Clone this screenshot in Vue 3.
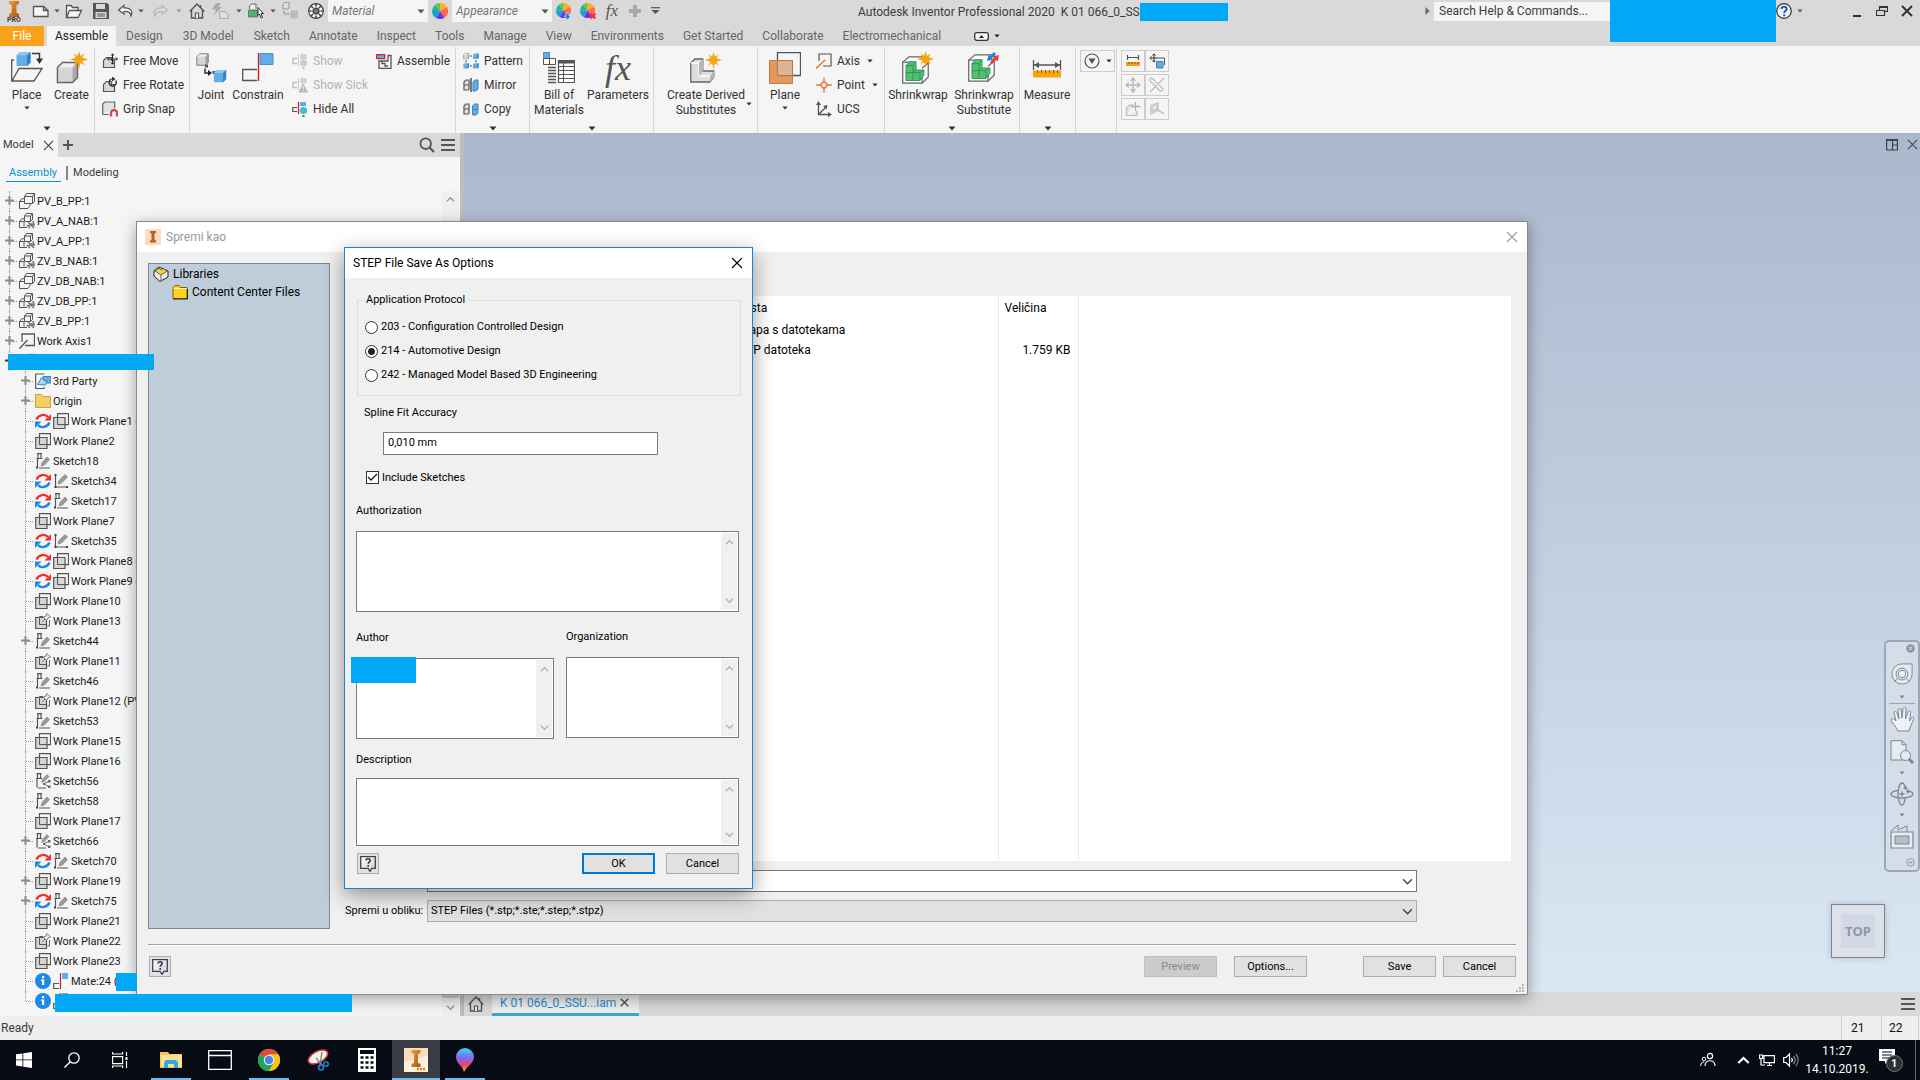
<script setup>
import { h, ref } from 'vue'

const Ico = (p) =>
  h('svg', { class: 'ico', width: p.w || p.s || 16, height: p.s || 16, 'aria-hidden': 'true' }, [h('use', { href: '#i-' + p.n })])
Ico.props = ['n', 's', 'w']

const tabs = ['Design', '3D Model', 'Sketch', 'Annotate', 'Inspect', 'Tools', 'Manage', 'View', 'Environments', 'Get Started', 'Collaborate', 'Electromechanical']

const n = (text, icon, opt = {}) => ({ text, icon, ...opt })
const child = (text, icon, opt = {}) => ({ text, icon, child: true, ...opt })
const tree = [
  n('PV_B_PP:1', 'asm', { plus: true }),
  n('PV_A_NAB:1', 'asmp', { plus: true }),
  n('PV_A_PP:1', 'asmp', { plus: true }),
  n('ZV_B_NAB:1', 'asmp', { plus: true }),
  n('ZV_DB_NAB:1', 'asm', { plus: true }),
  n('ZV_DB_PP:1', 'asmp', { plus: true }),
  n('ZV_B_PP:1', 'asmp', { plus: true }),
  n('Work Axis1', 'waxis', { plus: true }),
  n('', 'asmblue', { minus: true, mask: 'mask-row' }),
  child('3rd Party', 'third', { plus: true }),
  child('Origin', 'folder', { plus: true }),
  child('Work Plane1 (', 'plane', { pre: 'sync' }),
  child('Work Plane2', 'plane'),
  child('Sketch18', 'sketchp'),
  child('Sketch34', 'sketch', { pre: 'sync' }),
  child('Sketch17', 'sketchp', { pre: 'sync' }),
  child('Work Plane7', 'plane'),
  child('Sketch35', 'sketch', { pre: 'sync' }),
  child('Work Plane8 (', 'plane', { pre: 'sync' }),
  child('Work Plane9 (', 'plane', { pre: 'sync' }),
  child('Work Plane10', 'plane'),
  child('Work Plane13', 'planep'),
  child('Sketch44', 'sketchp', { plus: true }),
  child('Work Plane11', 'planep'),
  child('Sketch46', 'sketchp'),
  child('Work Plane12 (PV', 'planep'),
  child('Sketch53', 'sketchp'),
  child('Work Plane15', 'plane'),
  child('Work Plane16', 'plane'),
  child('Sketch56', 'sketchs'),
  child('Sketch58', 'sketchp'),
  child('Work Plane17', 'plane'),
  child('Sketch66', 'sketchs', { plus: true }),
  child('Sketch70', 'sketchp', { pre: 'sync' }),
  child('Work Plane19', 'plane', { plus: true }),
  child('Sketch75', 'sketchp', { pre: 'sync', plus: true }),
  child('Work Plane21', 'plane'),
  child('Work Plane22', 'planep'),
  child('Work Plane23', 'plane'),
  child('Mate:24 (', 'mate', { pre: 'info', mask: 'mask-mate' }),
  child('', 'mate', { pre: 'info', mask: 'mask-last', last: true }),
]

const protocols = [
  ['203', '203 - Configuration Controlled Design'],
  ['214', '214 - Automotive Design'],
  ['242', '242 - Managed Model Based 3D Engineering'],
]
const protocol = ref('214')
const accuracy = ref('0,010 mm')
const sketches = ref(true)
const tasks = [
  ['explorer', 'run'], ['appwin', ''], ['chrome', 'run'], ['snip', ''], ['calc', ''], ['inventor', 'active'], ['paint3d', 'run'],
]
</script>

<template>
  <svg class="defs" width="0" height="0" aria-hidden="true">
    <defs>
      <linearGradient id="g-or" x1="0" y1="0" x2="1" y2="1"><stop offset="0" stop-color="#f19a3e" /><stop offset="1" stop-color="#a5560f" /></linearGradient>
      <linearGradient id="g-paper" x1="0" y1="0" x2="1" y2="1"><stop offset="0" stop-color="#fff" /><stop offset="1" stop-color="#c9ccd4" /></linearGradient>
      <linearGradient id="g-drop" x1="0" y1="0" x2="0" y2="1"><stop offset="0" stop-color="#2fe0e8" /><stop offset=".4" stop-color="#7a6df2" /><stop offset=".7" stop-color="#e8407a" /><stop offset="1" stop-color="#ffb400" /></linearGradient>
      <symbol id="i-pro" viewBox="0 0 16 16"><path d="M3 0h10v3l-2.500 1v8l2.500 1v3H3v-3l2.500-1V4L3 3z" fill="url(#g-or)" /></symbol>
      <symbol id="i-new" viewBox="0 0 18 16"><path d="M1.500 3.500h10l4.500 4v6h-14.500zM11.500 3.500v4h4.500" fill="#f5f5f5" stroke="#555" stroke-width="1.300" /></symbol>
      <symbol id="i-open" viewBox="0 0 18 16"><path d="M1.500 14V2.500h4.500l1.500 2h5.500v3M1.500 14.500l3-7h12l-3.500 7z" fill="#f5f5f5" stroke="#555" stroke-width="1.300" /></symbol>
      <symbol id="i-save" viewBox="0 0 16 16"><path d="M0 0h14l2 2v14H0z" fill="#555" /><path d="M3 1h9v5H3zM2.500 9h11v6h-11z" fill="#d9d9d9" /><path d="M4 11h8M4 13h8" stroke="#555" /></symbol>
      <symbol id="i-undo" viewBox="0 0 18 16"><path d="M7 2.500L1.500 7 7 11V8.500c5-.5 6.500 1.500 7 4.500 2.500-5-1-8.500-7-8z" fill="#f5f5f5" stroke="#555" stroke-width="1.200" /></symbol>
      <symbol id="i-redo" viewBox="0 0 18 16"><path d="M11 2.500L16.500 7 11 11V8.500c-5-.5-6.500 1.500-7 4.500-2.500-5 1-8.500 7-8z" fill="#ddd" stroke="#b5b5b5" stroke-width="1.200" /></symbol>
      <symbol id="i-home" viewBox="0 0 16 16"><path d="M.7 8.500L8 1l7.300 7.500M2.500 7v8h11V7M11.500 2v3" fill="none" stroke="#555" stroke-width="1.400" /><path d="M6.500 15v-5h3v5" fill="#fff" stroke="#555" stroke-width="1.200" /></symbol>
      <symbol id="i-bolt" viewBox="0 0 18 16"><path d="M4 0h5L6.500 4H10L2 12l2-5.500H0z" fill="#aaa" /><path d="M7.500 8.500h5.500l3.500 3v4h-9z" fill="#ddd" stroke="#aaa" /></symbol>
      <symbol id="i-pick" viewBox="0 0 18 16"><path d="M2.500 6V3l2-2H9v4.500" fill="#eee" stroke="#666" /><path d="M1.500 7h9v7h-9z" fill="#4fb36e" stroke="#4a4a4a" stroke-width=".6" /><path d="M11 4.500l5.500 6h-2.500l1.500 4-1.500.5-1.500-4-1.500 1.500z" fill="#fff" stroke="#333" /></symbol>
      <symbol id="i-link" viewBox="0 0 18 18"><path d="M2 2l1.500-1.500H8V6L7 7H2z" fill="#ddd" stroke="#999" /><path d="M3 9v3h5" fill="none" stroke="#777" stroke-dasharray="2 1" /><path d="M9 10l1.500-1.500H17V15l-1.500 1.500H9z" fill="#bbb" /></symbol>
      <symbol id="i-mesh" viewBox="0 0 16 16"><circle cx="8" cy="8" r="7.400" fill="#f5f5f5" stroke="#444" stroke-width="1.200" /><path d="M8 .5v3M8 12.500v3M.5 8h3M12.500 8h3M3 3l2 2M11 11l2 2M3 13l2-2M11 5l2-2" stroke="#444" stroke-width="1.700" /><circle cx="8" cy="8" r="3" fill="#777" stroke="#333" stroke-width="1.200" /></symbol>
      <symbol id="i-wheel" viewBox="0 0 16 16"><path d="M8 8L8 0A8 8 0 0 1 15 4z" fill="#ffb21a" /><path d="M8 8L15 4A8 8 0 0 1 15 12z" fill="#ff6a4a" /><path d="M8 8L15 12A8 8 0 0 1 11 15.400z" fill="#ff5a5a" /><path d="M8 8L12 15A8 8 0 0 1 4 15z" fill="#6a35e8" /><path d="M8 8L4 15A8 8 0 0 1 0 8z" fill="#1f9fd0" /><path d="M8 8L0 8A8 8 0 0 1 3 1.800z" fill="#20b592" /><path d="M8 8L3 1.800A8 8 0 0 1 8 0z" fill="#6cc344" /></symbol>
      <symbol id="i-wheel1" viewBox="0 0 18 18"><use href="#i-wheel" width="15" height="15" x="1" y="1" /><path d="M11 11h3v3h2l-3.500 4L9 14h2z" fill="#1f86e0" stroke="#fff" stroke-width=".5" /></symbol>
      <symbol id="i-wheel2" viewBox="0 0 18 18"><use href="#i-wheel" width="15" height="15" x="1" y="1" /><path d="M11.500 11.500l5 5m0-5l-5 5" stroke="#e33" stroke-width="2.200" /></symbol>
      <symbol id="i-addg" viewBox="0 0 12 12"><path d="M4 0h4v4h4v4H8v4H4V8H0V4h4z" fill="#a8a8a8" /></symbol>
      <symbol id="i-qat" viewBox="0 0 9 8"><path d="M0 .7h9" stroke="#555" stroke-width="1.200" /><path d="M.5 3h8L4.500 7z" fill="#555" /></symbol>
      <symbol id="i-dn" viewBox="0 0 8 5"><path d="M.5.5h7L4 4.500z" fill="currentColor" /></symbol>
      <symbol id="i-rt" viewBox="0 0 5 8"><path d="M.5 0v8L4.500 4z" fill="#666" /></symbol>
      <symbol id="i-chev" viewBox="0 0 10 10"><path d="M1 3l4 4 4-4" fill="none" stroke="currentColor" stroke-width="1.300" /></symbol>
      <symbol id="i-up" viewBox="0 0 10 10"><path d="M1 7l4-4 4 4" fill="none" stroke="currentColor" stroke-width="1.600" /></symbol>
      <symbol id="i-down" viewBox="0 0 10 10"><path d="M1 3l4 4 4-4" fill="none" stroke="currentColor" stroke-width="1.600" /></symbol>
      <symbol id="i-x" viewBox="0 0 12 12"><path d="M1 1l10 10M11 1L1 11" stroke="currentColor" stroke-width="1.100" /></symbol>
      <symbol id="i-xb" viewBox="0 0 12 12"><path d="M1 1l10 10M11 1L1 11" stroke="currentColor" stroke-width="2" /></symbol>
      <symbol id="i-min" viewBox="0 0 12 12"><path d="M2 11h8" stroke="#333" stroke-width="2" /></symbol>
      <symbol id="i-restore" viewBox="0 0 12 12"><path d="M3.500 5V1.500h8v5H9" fill="none" stroke="#333" stroke-width="1.200" /><path d="M3.500 2h8" stroke="#333" stroke-width="2" /><path d="M.5 5.500h8v5h-8z" fill="none" stroke="#333" stroke-width="1.200" /></symbol>
      <symbol id="i-helpc" viewBox="0 0 16 16"><circle cx="8" cy="8" r="7.300" fill="#eef2fa" stroke="#333" stroke-width="1.200" /><path d="M5.500 6c0-3.300 5.200-3 5.200 0 0 1.700-2.500 1.800-2.500 4M8.200 11.300v2" fill="none" stroke="#1d4fb8" stroke-width="1.900" /></symbol>
      <symbol id="i-toggle" viewBox="0 0 15 9"><rect x=".7" y=".7" width="13.600" height="7.600" rx="2" fill="#f5f5f5" stroke="#333" stroke-width="1.300" /><path d="M5 6l2.500-3L10 6z" fill="#222" /></symbol>

      <symbol id="i-star" viewBox="0 0 18 18"><path d="M9 0l1.500 5 4-2.500-2.300 4 5.800 2-5.800 1.800 2.600 4.200-4.300-2.500L9 18l-1.500-6-4.300 2.500L5.800 10.300 0 8.500l5.800-2L3.500 2.500l4 2.500z" fill="#f7a413" /></symbol>
      <symbol id="i-cubeb" viewBox="0 0 16 16"><path d="M1 4.500L4.500 1H15v10.500L11.500 15H1z" fill="#62ade4" /><path d="M1 4.500L4.500 1H15l-3.500 3.500z" fill="#8cc6ee" /><path d="M15 1v10.500L11.500 15V4.500z" fill="#2f80c4" /></symbol>
      <symbol id="i-cubeg" viewBox="0 0 16 16"><path d="M1 4.500L4.500 1H15v10.500L11.500 15H1z" fill="#d6d6d6" /><path d="M1 4.500L4.500 1H15l-3.500 3.500z" fill="#f0f0f0" /><path d="M15 1v10.500L11.500 15V4.500z" fill="#aaa" /><path d="M1 4.500L4.500 1H15v10.500L11.500 15H1z" fill="none" stroke="#666" /></symbol>
      <symbol id="i-place" viewBox="0 0 32 32"><path d="M3 8H.7v21M8 16.500h23L23 29H1z" fill="#f5f5f5" stroke="#555" stroke-width="1.300" /><use href="#i-cubeb" width="16" height="16" x="4.500" y="-1" /><path d="M21 1.500h7.500V8" fill="none" stroke="#333" stroke-width="1.400" /><path d="M25 6.500h7L28.500 12z" fill="#333" /></symbol>
      <symbol id="i-create" viewBox="0 0 32 32"><use href="#i-cubeg" width="23" height="23" x="0" y="9" /><use href="#i-star" width="18" height="18" x="14" y="-1" /></symbol>
      <symbol id="i-fbase" viewBox="0 0 16 16"><path d="M1.500 14.500V7.500l3-3h5v3h3v7z" fill="#d9d9d9" stroke="#555" stroke-width="1.200" /></symbol>
      <symbol id="i-fmove" viewBox="0 0 16 16"><use href="#i-fbase" width="16" height="16" /><path d="M10.500 1v10M5.500 6h10M9 2.500L10.500.8 12 2.500M9 9.500l1.500 1.700L12 9.500M7 4.500L5.500 6 7 7.500M14 4.500L15.500 6 14 7.500" fill="none" stroke="#222" /></symbol>
      <symbol id="i-frot" viewBox="0 0 16 16"><use href="#i-fbase" width="16" height="16" /><path d="M9.500 2a3.600 3.600 0 1 0 4.300 1.500" fill="none" stroke="#333" stroke-width="1.500" /><path d="M10-.5v5l3.500-2.500z" fill="#333" /></symbol>
      <symbol id="i-grip" viewBox="0 0 16 16"><path d="M.7 13.500V3l2-2h10v6M.7 13.500H7" fill="#e2e2e2" stroke="#666" stroke-width="1.200" /><path d="M9 15.500v-3.500a3 3 0 0 1 6 0v3.500" fill="none" stroke="#c9534f" stroke-width="2.400" /></symbol>
      <symbol id="i-joint" viewBox="0 0 32 32"><use href="#i-cubeg" width="13" height="13" x="1" y="1" /><path d="M10 12.500h3v3h-3zM17.500 19h3v3h-3z" fill="#555" /><path d="M10 16.500V21h4" fill="none" stroke="#333" stroke-width="1.500" /><path d="M13 18l4 3-4 3z" fill="#222" /><use href="#i-cubeb" width="14" height="14" x="18" y="17" /></symbol>
      <symbol id="i-constrain" viewBox="0 0 32 32"><path d="M15 17.500H.7v11H15" fill="none" stroke="#555" stroke-width="1.300" /><path d="M16.500 1v28" stroke="#c8202a" stroke-width="1.400" /><path d="M18 1.500h13v11H18z" fill="#62ade4" stroke="#4b90c9" /></symbol>
      <symbol id="i-show" viewBox="0 0 16 16"><path d="M5 5.500H1v5h4" fill="none" stroke="#bbb" stroke-width="1.300" /><path d="M6.500 1v12M9 1.500h5v4H9z" stroke="#ccc" fill="#d3d3d3" /><circle cx="11.500" cy="10" r="3.500" fill="#ccc" /><path d="M10.500 14h2v2h-2z" fill="#bbb" /></symbol>
      <symbol id="i-sick" viewBox="0 0 16 16"><path d="M5 5.500H1v5h4" fill="none" stroke="#bbb" stroke-width="1.300" /><path d="M6.500 1v12M9 1.500h5v4H9z" stroke="#ccc" fill="#d3d3d3" /><path d="M11 6l5 9.500H6.500z" fill="#b5b5b5" /><path d="M11.200 9v3M11.200 13v1.300" stroke="#fff" /></symbol>
      <symbol id="i-hide" viewBox="0 0 16 16"><path d="M5 6.500H.8v4H5" fill="none" stroke="#555" stroke-width="1.200" /><path d="M6.500 1v12" stroke="#c8202a" stroke-width="1.300" /><path d="M8 1h6v4H8z" fill="#62ade4" /><circle cx="11.500" cy="9.500" r="3.600" fill="#3fc1c9" /><path d="M10.500 14h2v2h-2z" fill="#666" /></symbol>
      <symbol id="i-asmb" viewBox="0 0 16 16"><path d="M.7 1.700h8v4h-8z" fill="#62ade4" stroke="#c8202a" stroke-width="1.200" /><path d="M3 8h9V2.500h3v13H3zM6 8v2.500h3V13h3" fill="none" stroke="#555" stroke-width="1.300" /></symbol>
      <symbol id="i-pattern" viewBox="0 0 16 16"><use href="#i-cubeg" width="6.500" height="6.500" x="0" y="0" /><use href="#i-cubeb" width="6.500" height="6.500" x="9.500" y="0" /><use href="#i-cubeb" width="6.500" height="6.500" x="0" y="9.500" /><use href="#i-cubeb" width="6.500" height="6.500" x="9.500" y="9.500" /><path d="M7 3h2M3 7v2.500M13 7v2.500M7 13h2" stroke="#555" /></symbol>
      <symbol id="i-mirror" viewBox="0 0 16 16"><path d="M1 5l2-2h3v9l-1 1H1zM1 8h5" fill="#e5e5e5" stroke="#555" stroke-width="1.200" /><path d="M8 1v14" stroke="#333" stroke-width="1.300" /><path d="M10 5l2-2h3v9l-2 2h-3z" fill="#62ade4" stroke="#3b83bd" /></symbol>
      <symbol id="i-copy" viewBox="0 0 16 16"><path d="M1 5l2-2h3v9l-1 1H1zM1 8h5" fill="#e5e5e5" stroke="#555" stroke-width="1.200" /><path d="M9.500 5l2-2H15v9l-2 2H9.500zM9.500 8.500H15" fill="#62ade4" stroke="#3b83bd" /></symbol>
      <symbol id="i-bom" viewBox="0 0 32 32"><path d="M.5.500h6v6h-6z" fill="#62ade4" stroke="#4b90c9" /><path d="M.5 6.500h6v6h-6zM6.500 6.500h6v6h-6z" fill="#fff" stroke="#555" /><path d="M5 15.500h8M5 18.500h8M5 21.500h8M5 24.500h8M5 27.500h8M5 30.500h8" stroke="#555" stroke-width="1.400" /><path d="M15.500 8.500h16v22h-16z" fill="#fff" stroke="#555" stroke-width="1.200" /><path d="M15.500 10h16" stroke="#555" stroke-width="3" /><path d="M15.500 14.500h16M15.500 18.500h16M15.500 22.500h16M15.500 26.500h16M20.500 9v21" stroke="#555" /></symbol>
      <symbol id="i-derive" viewBox="0 0 32 32"><path d="M.8 29V11l4-4h8v12h11v6l-4 5H.8z" fill="#ddd" stroke="#666" stroke-width="1.300" /><path d="M1 11h8v13h11" fill="none" stroke="#fff" stroke-width="1.300" /><path d="M9 11l4-4v12l-4 5M20 24v6l4-5v-6z" fill="#b5b5b5" /><use href="#i-star" width="17" height="17" x="15" y="0" /></symbol>
      <symbol id="i-bplane" viewBox="0 0 32 32"><path d="M8.500.500h23v23h-23z" fill="none" stroke="#555" stroke-width="1.300" /><path d="M.5 8.500h23v23H.5z" fill="#e0803a" fill-opacity=".8" stroke="#d0793b" /><path d="M8.500 8.500h15v15h-15z" fill="#dfb493" stroke="#b07a50" /></symbol>
      <symbol id="i-axis" viewBox="0 0 16 16"><path d="M3 8V1h12v12H7" fill="none" stroke="#555" stroke-width="1.200" /><path d="M0 15.500L9 7" stroke="#e0702a" stroke-width="1.400" /></symbol>
      <symbol id="i-point" viewBox="0 0 16 16"><path d="M8 0v16M0 8h16" stroke="#e08850" stroke-width="1.300" /><path d="M8 3l5 5-5 5-5-5z" fill="#e08850" /><circle cx="8" cy="8" r="2" fill="#f5f5f5" /></symbol>
      <symbol id="i-ucs" viewBox="0 0 16 16"><path d="M2.500 2v11.500H14M3 13L10 6" fill="none" stroke="#555" stroke-width="1.300" /><path d="M0 4l2.500-4L5 4zM12 11l4 2.500-4 2.500zM7 5l4.500-1-1 4.500z" fill="#555" /></symbol>
      <symbol id="i-wrapbox" viewBox="0 0 32 32"><path d="M.8 7L8 1h22v23l-7 7H.8z" fill="#fbfbfb" stroke="#666" stroke-width="1.400" /><path d="M.8 7H10M23 18v13M23 14l7-6" fill="none" stroke="#666" stroke-width="1.400" /><path d="M4.500 28V11l4-4.500h7.500v9.500h9v6l-4.500 6z" fill="#4fc074" stroke="#2f8f50" /><path d="M4.500 19h16M12.500 11v17M4.500 11h8l3.500-4.500M12.500 19l3.500-3M20.500 19l4.500-3M20.500 19v9" fill="none" stroke="#2f8f50" /></symbol>
      <symbol id="i-wrap" viewBox="0 0 32 32"><use href="#i-wrapbox" width="28" height="28" x="0" y="4" /><use href="#i-star" width="17" height="17" x="15" y="-1" /></symbol>
      <symbol id="i-wraps" viewBox="0 0 32 32"><use href="#i-wrapbox" width="28" height="28" x="0" y="2" /><path d="M26 0l-4 4-1.500-1.500L19 9l6.500-1.500L24 6l4-4z" fill="#1f86e0" /><path d="M22 10l4-4-1.500-1.500L31 3l-1.500 6.500L28 8l-4 4z" fill="#ee3a30" /></symbol>
      <symbol id="i-measure" viewBox="0 0 32 32"><path d="M2.500 8v10M29.500 8v10M3 13h26" stroke="#555" stroke-width="1.300" /><path d="M3 13l5-3v6zM29 13l-5-3v6z" fill="#555" /><path d="M2 18.500h28v7H2z" fill="#f7a413" /><path d="M6.500 18v3M10.500 18v3M14.500 18v3M18.500 18v3M22.500 18v3M26.500 18v3" stroke="#8c5a00" /></symbol>
      <symbol id="i-filter" viewBox="0 0 16 16"><circle cx="8" cy="8" r="7" fill="#f5f5f5" stroke="#555" stroke-width="1.200" /><path d="M4.500 5.500h7L8 11z" fill="#555" /></symbol>
      <symbol id="i-smeas" viewBox="0 0 14 14"><path d="M1.500 1v5M12.500 1v5M2 3.500h10" stroke="#555" stroke-width="1.200" /><path d="M0 8h14v4H0z" fill="#f7a413" /><path d="M3 8v2M6 8v2M9 8v2M12 8v2" stroke="#7a5000" /></symbol>
      <symbol id="i-smove" viewBox="0 0 16 16"><path d="M5 1v8M1 5h8M3.500 2.500L5 .8l1.500 1.700M3.500 7.500L5 9.200l1.500-1.700M2.500 3.500L.8 5l1.700 1.500" fill="none" stroke="#333" /><path d="M9 5h6.500v7" fill="none" stroke="#555" /><path d="M7.500 8.500h6.500v6.500H7.500z" fill="#62ade4" stroke="#3b83bd" /></symbol>
      <symbol id="i-dmove" viewBox="0 0 16 16"><path d="M8 1v14M1 8h14M5.500 4L8 1l2.500 3M5.500 12L8 15l2.500-3M4 5.500L1 8l3 2.500M12 5.500L15 8l-3 2.500" fill="none" stroke="#b8b8b8" stroke-width="1.400" /></symbol>
      <symbol id="i-drot" viewBox="0 0 16 16"><path d="M1 15L15 1M3 1l11 11M1.500 4.500l9 9M3 1a2 2 0 0 0-1.500 3.500M14 12a2 2 0 0 1-3.500 1.500" fill="none" stroke="#bdbdbd" stroke-width="1.300" /></symbol>
      <symbol id="i-dfree" viewBox="0 0 16 16"><path d="M1.500 14.500V7l3-3h4M1.500 14.500H12V10" fill="#e8e8e8" stroke="#bbb" stroke-width="1.200" /><path d="M10.500 1v9M6 5.500h9.500" stroke="#b0b0b0" stroke-width="1.300" /></symbol>
      <symbol id="i-dplane" viewBox="0 0 16 16"><path d="M1 4l9-3v9L1 14z" fill="#ccc" /><path d="M4 5.500l3-1v3l-3 1z" fill="#eee" /><path d="M8 8l7 5" stroke="#bbb" stroke-width="1.500" /></symbol>

      <symbol id="i-plus" viewBox="0 0 9 9"><path d="M4.500 0v9M0 4.500h9" stroke="#8a8a8a" stroke-width="2" /></symbol>
      <symbol id="i-plusd" viewBox="0 0 10 10"><path d="M5 0v10M0 5h10" stroke="#555" stroke-width="2" /></symbol>
      <symbol id="i-minus" viewBox="0 0 9 9"><path d="M0 4.500h9" stroke="#333" stroke-width="2" /></symbol>
      <symbol id="i-asm" viewBox="0 0 16 16"><path d="M5.500 3.500l2-3h8v8l-2 2h-8zM5.500 3.500h8v7M13.500 3.500l2-3M5 6l-2-.5-2.500 3v7H9l2-3v-2M.5 8.500h4.500" fill="none" stroke="#555" /></symbol>
      <symbol id="i-asmp" viewBox="0 0 16 16"><path d="M5.500 3l2-2.500h6v6l-2 2h-6zM5.500 3h6v5.500M11.500 3l2-2.500M5 6l-2-.5-2.500 3v6H8M.5 8.500h4.500M5 8.500v5" fill="none" stroke="#555" /><path d="M9 9l6 6M9 14l3-3 3 1-1-4M8 12l3 3" fill="none" stroke="#777" stroke-width="1.600" /></symbol>
      <symbol id="i-asmblue" viewBox="0 0 16 16"><use href="#i-cubeb" width="10" height="10" x="6" y="0" /></symbol>
      <symbol id="i-waxis" viewBox="0 0 16 16"><path d="M3 9V1h12.500v11.500H6" fill="none" stroke="#555" stroke-width="1.300" /><path d="M.5 15.500L8.500 7" stroke="#555" stroke-width="1.300" /></symbol>
      <symbol id="i-third" viewBox="0 0 16 16"><path d="M9.500 1H.7v14.500H9V14" fill="#fff" stroke="#555" stroke-width="1.200" /><path d="M8 3.500h8v6.500H8z" fill="#62ade4" stroke="#3b83bd" /><path d="M2.500 11.500l4-7 3 3.500h3l-2 4z" fill="#a8d3f2" stroke="#3b83bd" /></symbol>
      <symbol id="i-folder" viewBox="0 0 16 16"><path d="M.5 1.500h6l1 2h8v11H.5z" fill="#f4cf65" stroke="#c9a23c" /></symbol>
      <symbol id="i-plane" viewBox="0 0 16 16"><path d="M4.500.700h11v11h-11z" fill="#f5f5f5" stroke="#555" stroke-width="1.200" /><path d="M.7 4.500H12v11H.7z" fill="#cfcfcf" fill-opacity=".8" stroke="#555" stroke-width="1.200" /><path d="M4.500 4.500v7H12" fill="none" stroke="#555" /></symbol>
      <symbol id="i-planep" viewBox="0 0 16 16"><path d="M4.500 6V3.500h4M14.500 7v6h-2" fill="none" stroke="#666" /><path d="M.7 4.500H11.500v11H.7z" fill="#d5d5d5" stroke="#555" stroke-width="1.200" /><path d="M4.500 4.500v7h7" fill="none" stroke="#555" /><path d="M7 9l3-3-1.500-1.500L11 3l1-2.500L15.500 4 13 5l-1.500 2.500L10 6" fill="#eee" stroke="#777" /></symbol>
      <symbol id="i-sketch" viewBox="0 0 16 16"><path d="M2.500 3v11H13" fill="none" stroke="#555" stroke-width="1.200" /><path d="M1.500 1h2v2h-2zM1.500 13h2v2h-2zM13 13h2v2h-2z" fill="#444" /><path d="M5 11l1-3.500 6-6 2.500 2.500-6 6z" fill="#9a9a9a" stroke="#777" stroke-width=".6" /></symbol>
      <symbol id="i-sketchp" viewBox="0 0 16 16"><path d="M2 .7h5M3 1v4M6 1v4M1.500 5.500h6M2.500 6v8.500M4 15h11" fill="none" stroke="#555" stroke-width="1.200" /><path d="M1 13.500h2v2H1z" fill="#444" /><path d="M6 13l1-3.500 5-5.500 2.500 2.500-5 5.500z" fill="#9a9a9a" stroke="#777" stroke-width=".6" /></symbol>
      <symbol id="i-sketchs" viewBox="0 0 16 16"><path d="M1.500.700h5M2.500 1v4M5.500 1v4M1 5.500h6M2 6v8.500M3 15h8" fill="none" stroke="#555" stroke-width="1.200" /><path d="M6 10l1-3.500 5-5.500 2.500 2.500-5 5.500z" fill="#9a9a9a" /><path d="M9 11l5-3M9 11l5 3" stroke="#666" fill="none" /><path d="M13 7h2.500v2.500H13zM13 12.500h2.500V15H13zM8 10h2v2H8z" fill="#666" /></symbol>
      <symbol id="i-sync" viewBox="0 0 16 16"><path d="M1.500 6.500C3.500 1.500 10 .5 13 4" fill="none" stroke="#f2302c" stroke-width="2.400" /><path d="M16 1v6.500H9.500z" fill="#f2302c" /><path d="M14.500 9.500C12.500 14.500 6 15.500 3 12" fill="none" stroke="#1a8be6" stroke-width="2.400" /><path d="M0 15V8.500h6.500z" fill="#1a8be6" /></symbol>
      <symbol id="i-info" viewBox="0 0 16 16"><circle cx="8" cy="8" r="8" fill="#1a8be6" /><path d="M7 3h2.200v2.200H7zM6 6.500h3.200V12H7V8H6z" fill="#fff" /></symbol>
      <symbol id="i-mate" viewBox="0 0 16 16"><path d="M6 10.500H.7v5H6" fill="none" stroke="#555" stroke-width="1.200" /><path d="M7.500 0v16" stroke="#c8202a" stroke-width="1.200" /><path d="M9 0h6v6H9z" fill="#62ade4" /></symbol>
      <symbol id="i-mag" viewBox="0 0 16 16"><circle cx="6.700" cy="6.700" r="5.300" fill="none" stroke="#555" stroke-width="1.800" /><path d="M10.500 10.500l4.500 4.500" stroke="#555" stroke-width="2.200" /></symbol>
      <symbol id="i-menu" viewBox="0 0 14 12"><path d="M0 1h14M0 6h14M0 11h14" stroke="#555" stroke-width="2" /></symbol>
      <symbol id="i-dock" viewBox="0 0 12 12"><path d="M.6 1h10.800v10H.6zM6.500 1v10M6.500 6h5" fill="none" stroke="#444" stroke-width="1.200" /><path d="M0 1h12" stroke="#444" stroke-width="2" /></symbol>
      <symbol id="i-invs" viewBox="0 0 16 16"><path d="M0 0h16v16H0z" fill="#fbdcc0" /><path d="M5 2h6v2l-1.500.5v6.500l1.500.5v2H5v-2l1.500-.5V4.500L5 4z" fill="#b5651d" /></symbol>
      <symbol id="i-lib" viewBox="0 0 16 16"><path d="M1 5l5-4 9 4v6l-8 4.500L1 10z" fill="#f2efdc" stroke="#222" /><path d="M2 5l6 4 6-4-3.500-2.500L8 4 6 2z" fill="#e9d936" stroke="#444" stroke-width=".8" /><path d="M8 9v6" stroke="#666" /></symbol>
      <symbol id="i-yfold" viewBox="0 0 16 16"><path d="M1 3.500l2-2h4l1.500 2H15v11H1z" fill="#ffd21f" stroke="#7a6200" /><path d="M1 15h14.500V5" fill="none" stroke="#222" /><path d="M1.500 4.500h13" stroke="#fff3a8" /></symbol>
      <symbol id="i-help" viewBox="0 0 16 16"><path d="M.7.700h14.600v11.600H12l-2 3-2-3H.7z" fill="url(#g-paper)" stroke="#3c4352" stroke-width="1.300" /><path d="M6 4.500c0-2.500 4.200-2.300 4.200 0 0 1.300-2 1.500-2 3.300M8.200 9v1.800" fill="none" stroke="#2b2f3a" stroke-width="1.500" /></symbol>
      <symbol id="i-grab" viewBox="0 0 8 8"><path d="M6 0h2v2H6zM6 3h2v2H6zM6 6h2v2H6zM3 3h2v2H3zM3 6h2v2H3zM0 6h2v2H0z" fill="#b8b8b8" /></symbol>

      <symbol id="i-nx" viewBox="0 0 9 9"><circle cx="4.500" cy="4.500" r="4.300" fill="#8f97a4" /><path d="M2.800 2.800l3.400 3.400M6.200 2.800L2.800 6.200" stroke="#e3e8f0" /></symbol>
      <symbol id="i-nm" viewBox="0 0 9 9"><circle cx="4.500" cy="4.500" r="3.800" fill="none" stroke="#8f97a4" /><path d="M2.500 4.500h4" stroke="#8f97a4" stroke-width="1.500" /></symbol>
      <symbol id="i-nwheel" viewBox="0 0 24 24"><path d="M12 1h11v11A11 11 0 1 1 12 1z" fill="#e6ebf2" stroke="#7d8591" /><circle cx="12" cy="12" r="6.500" fill="#d8dee8" stroke="#7d8591" /><circle cx="12" cy="12" r="4" fill="#eef1f6" stroke="#7d8591" /><path d="M7 17l-3 3M17 17l3 3" stroke="#7d8591" /></symbol>
      <symbol id="i-nhand" viewBox="0 0 24 26"><path d="M8 24C6 19 1 15 1 13s3-2 5 1L4 6c0-2 2.500-2 3 0l2 6-1-9c0-2 3-2 3 0l1 8 1-9c0-2 3-2 3 0l-.5 10L18 5c.5-2 3-1.500 2.700.3L19.500 14l2-3c1-1.500 3-.5 2 1.500C21 18 20 20 19 24z" fill="#eef1f6" stroke="#7d8591" /></symbol>
      <symbol id="i-nzoom" viewBox="0 0 24 24"><path d="M1 .700h11l4 4V20H1z" fill="#e6ebf2" stroke="#7d8591" /><path d="M12 .700v4h4" fill="none" stroke="#7d8591" /><path d="M19 19l4 4" stroke="#7d8591" stroke-width="3" /><circle cx="15.500" cy="15.500" r="5" fill="#e6ebf2" stroke="#7d8591" /></symbol>
      <symbol id="i-norb" viewBox="0 0 24 24"><path d="M9 8.300C4 8.800 1 10.200 1 12c0 2.200 5 4 11 4s11-1.800 11-4c0-1.300-2-2.500-5-3.200M15 16.500C14.500 20.500 13.500 23 12 23c-2.200 0-4-5-4-11S9.800 1 12 1c1.500 0 2.700 2 3.400 5" fill="none" stroke="#7d8591" stroke-width="1.300" /><path d="M12 9.500v5M9.500 12h5M15.500 4v4M13.500 6h4M18 7.500v4M16 9.500h4" stroke="#7d8591" stroke-width="1.300" /></symbol>
      <symbol id="i-nlook" viewBox="0 0 24 26"><path d="M1 9h22v16H1z" fill="#e6ebf2" stroke="#7d8591" stroke-width="1.200" /><path d="M5 13h14v8H5z" fill="#b4bdcb" stroke="#7d8591" /><path d="M1 8l7-6v5l9-4v6" fill="none" stroke="#7d8591" /></symbol>

      <symbol id="i-win" viewBox="0 0 16 16"><path d="M0 2.300L6.500 1.400v6.100H0zM7.300 1.300L16 0v7.500H7.300zM0 8.300h6.500v6.200L0 13.600zM7.300 8.300H16V16l-8.700-1.300z" fill="#fff" /></symbol>
      <symbol id="i-wsearch" viewBox="0 0 16 16"><circle cx="10" cy="6" r="5.200" fill="none" stroke="#fff" stroke-width="1.300" /><path d="M6.300 9.700L.5 15.500" stroke="#fff" stroke-width="1.400" /></symbol>
      <symbol id="i-tview" viewBox="0 0 16 16"><path d="M.6 4.600h10v7H.6zM.6 0v2h10V0M.6 16v-2h10v2M14.500 0v4M14.500 9v7" fill="none" stroke="#fff" stroke-width="1.200" /><path d="M13.500 5h2v3h-2z" fill="#fff" /></symbol>
      <symbol id="i-explorer" viewBox="0 0 22 20"><path d="M0 2h8l1.500 2H22v14H0z" fill="#f0c75a" /><path d="M1 5h21v12H1z" fill="#fbe08e" /><path d="M4 18v-5.500L6 10h10l2 2.500V18h-4v-4H8v4z" fill="#2ea8e6" /></symbol>
      <symbol id="i-appwin" viewBox="0 0 24 20"><path d="M.7.700h22.600v18.600H.7zM.7 5.500h22.600" fill="none" stroke="#fff" stroke-width="1.300" /></symbol>
      <symbol id="i-chrome" viewBox="0 0 22 22"><circle cx="11" cy="11" r="11" fill="#fbc116" /><path d="M11 11L1.500 5.500A11 11 0 0 1 20.500 5.500H11z" fill="#dd4b3e" /><path d="M11 11L1.500 5.500A11 11 0 0 0 11 22l5-8.500z" fill="#1da362" /><path d="M20.500 5.500H11V11l5 2.500L11 22A11 11 0 0 0 20.500 5.500z" fill="#fbc116" /><circle cx="11" cy="11" r="5.200" fill="#f5f5f5" /><circle cx="11" cy="11" r="4.200" fill="#4a86e8" /></symbol>
      <symbol id="i-snip" viewBox="0 0 22 22"><ellipse cx="11" cy="8" rx="10.500" ry="5.500" fill="#f3f3f3" stroke="#d93a3a" stroke-width="1.500" transform="rotate(-28 11 8)" /><path d="M9 9l6 7M15 3l-2 13" stroke="#888" stroke-width="1.500" /><circle cx="19" cy="15" r="2.200" fill="none" stroke="#1e7fc4" stroke-width="1.600" /><circle cx="14" cy="18.500" r="2.400" fill="none" stroke="#1e7fc4" stroke-width="1.600" /></symbol>
      <symbol id="i-calc" viewBox="0 0 18 24"><path d="M0 0h18v24H0z" fill="#fff" /><path d="M2 2h14v4H2z" fill="#0a0c12" /><path d="M2.500 9.500h13.500M2.500 14.500h13.500M2.500 19.500h13.500" stroke="#0a0c12" stroke-width="2.500" stroke-dasharray="3 2" /></symbol>
      <symbol id="i-inventor" viewBox="0 0 24 24"><path d="M0 0h24v24H0z" fill="#fbdcbf" /><path d="M0 14L24 8v16H0z" fill="#fff0e0" /><path d="M7.500 2h9v3l-2.500.8V15l2.500.8V19h-9v-3.200L10 15V5.800L7.500 5z" fill="url(#g-or)" /><path d="M13 21h8" stroke="#e07b1a" stroke-width="2.500" stroke-dasharray="2 1" /></symbol>
      <symbol id="i-paint3d" viewBox="0 0 20 24"><path d="M10 0a9 9 0 0 1 9 9c0 6-6 8-10 15 -1-2-1-4-3-6C3 15 1 13 1 9a9 9 0 0 1 9-9z" fill="url(#g-drop)" /></symbol>
      <symbol id="i-people" viewBox="0 0 16 16"><circle cx="10" cy="4" r="2.600" fill="none" stroke="#fff" stroke-width="1.200" /><path d="M5 14c0-7 10-7 10 0" fill="none" stroke="#fff" stroke-width="1.200" /><circle cx="4" cy="7" r="1.800" fill="none" stroke="#fff" /><path d="M.7 14c0-3 1.500-4 3.500-4" fill="none" stroke="#fff" /></symbol>
      <symbol id="i-net" viewBox="0 0 16 16"><path d="M5 3.600h10.400v7H5zM8 13.500h5M10.500 10.600v3M.6 3h3v3.500h-3zM2 6.500V13h4" fill="none" stroke="#fff" stroke-width="1.200" /></symbol>
      <symbol id="i-vol" viewBox="0 0 16 16"><path d="M.7 5.500H3l3.500-3.500v12L3 10.500H.7z" fill="none" stroke="#fff" stroke-width="1.200" /><path d="M8.500 6c1 1.200 1 2.800 0 4" fill="none" stroke="#fff" stroke-width="1.200" /><path d="M10.500 4c2 2.400 2 5.600 0 8M12.800 2c3 3.600 3 8.400 0 12" fill="none" stroke="#888" stroke-width="1.200" /></symbol>
      <symbol id="i-note" viewBox="0 0 24 24"><path d="M0 1h16v12h-7l-3 3v-3H0z" fill="#fff" /><path d="M3 4h10M3 7h10M3 10h7" stroke="#0a0c12" /><circle cx="15.500" cy="15.500" r="8" fill="#2b2e33" stroke="#777" /></symbol>
    </defs>
  </svg>

  <div class="app">
    <header class="title">
      <div class="qat">
        <span class="logo"><Ico n="pro" :s="16" /><b>PRO</b></span>
        <button class="q w26" aria-label="New"><Ico n="new" :w="18" /></button><Ico class="ar" n="dn" :w="6" :s="4" />
        <button class="q w28" aria-label="Open"><Ico n="open" :w="18" /></button>
        <button class="q w26" aria-label="Save"><Ico n="save" /></button>
        <button class="q w24" aria-label="Undo"><Ico n="undo" :w="18" /></button><Ico class="ar" n="dn" :w="6" :s="4" />
        <button class="q w32" aria-label="Redo"><Ico n="redo" :w="18" /></button><Ico class="ar dim" n="dn" :w="6" :s="4" />
        <button class="q w30" aria-label="Home"><Ico n="home" /></button>
        <button class="q w18" aria-label="Update"><Ico n="bolt" :w="18" /></button><span class="sp" /><Ico class="ar" n="dn" :w="6" :s="4" />
        <button class="q w28" aria-label="Select"><Ico n="pick" :w="18" /></button><Ico class="ar" n="dn" :w="6" :s="4" />
        <button class="q w28" aria-label="Adjust"><Ico n="link" :w="18" :s="18" /></button>
        <button class="q w24" aria-label="Material browser"><Ico n="mesh" /></button>
        <span class="drop first"><select aria-label="Material"><option>Material</option></select><Ico n="dn" :w="8" :s="5" /></span>
        <button class="q w24" aria-label="Appearance browser"><Ico n="wheel" /></button>
        <span class="drop"><select aria-label="Appearance"><option>Appearance</option></select><Ico n="dn" :w="8" :s="5" /></span>
        <button class="q w24" aria-label="Adjust appearance"><Ico n="wheel1" :s="18" /></button>
        <button class="q w24" aria-label="Clear appearance"><Ico n="wheel2" :s="18" /></button>
        <button class="q w24 fx" aria-label="Parameters">fx</button>
        <button class="q w22" aria-label="Add"><Ico n="addg" :s="12" /></button>
        <button class="q w18" aria-label="Customize"><Ico n="qat" :w="9" :s="8" /></button>
      </div>
      <h1>Autodesk Inventor Professional 2020<span>K 01 066_0_SSU</span></h1>
      <span class="mask mask-title" />
      <div class="sys">
        <Ico n="rt" :w="5" :s="8" />
        <input class="search" type="text" aria-label="Search" placeholder="Search Help &amp; Commands..." />
        <span class="acct"><span class="mask mask-acct" /></span>
        <button class="q w16" aria-label="Help"><Ico n="helpc" /></button><Ico class="ar" n="dn" :w="6" :s="4" />
        <span class="wins">
          <button class="q" aria-label="Minimize"><Ico n="min" :s="12" /></button>
          <button class="q" aria-label="Restore"><Ico n="restore" :s="12" /></button>
          <button class="q" aria-label="Close"><Ico n="xb" :s="12" /></button>
        </span>
      </div>
    </header>

    <nav class="tabs">
      <button class="file">File</button>
      <button class="on">Assemble</button>
      <button v-for="t in tabs" :key="t">{{ t }}</button>
      <button class="tog" aria-label="Minimize ribbon"><Ico n="toggle" :w="15" :s="9" /><Ico n="dn" :w="6" :s="4" /></button>
    </nav>

    <section class="ribbon">
      <div class="pan p1">
        <div class="row">
          <button class="big"><Ico n="place" :s="32" />Place<Ico class="bd" n="dn" :w="6" :s="4" /></button>
          <button class="big"><Ico n="create" :s="32" />Create</button>
        </div>
        <Ico class="foot" n="dn" :w="8" :s="5" />
      </div>
      <div class="pan p2"><div class="col">
        <button class="sm"><Ico n="fmove" />Free Move</button>
        <button class="sm"><Ico n="frot" />Free Rotate</button>
        <button class="sm"><Ico n="grip" />Grip Snap</button>
      </div></div>
      <div class="pan p3"><div class="row">
        <button class="big w42"><Ico n="joint" :s="32" />Joint</button>
        <button class="big w52"><Ico n="constrain" :s="32" />Constrain</button>
        <div class="col c84">
          <button class="sm" disabled><Ico n="show" />Show</button>
          <button class="sm" disabled><Ico n="sick" />Show Sick</button>
          <button class="sm"><Ico n="hide" />Hide All</button>
        </div>
        <div class="col bare"><button class="sm"><Ico n="asmb" />Assemble</button></div>
      </div></div>
      <div class="pan p4">
        <div class="col">
          <button class="sm"><Ico n="pattern" />Pattern</button>
          <button class="sm"><Ico n="mirror" />Mirror</button>
          <button class="sm"><Ico n="copy" />Copy</button>
        </div>
        <Ico class="foot" n="dn" :w="8" :s="5" />
      </div>
      <div class="pan p5">
        <div class="row">
          <button class="big w58"><Ico n="bom" :s="32" />Bill of<br />Materials</button>
          <button class="big w60"><span class="bigfx">fx</span>Parameters</button>
        </div>
        <Ico class="foot" n="dn" :w="8" :s="5" />
      </div>
      <div class="pan p6"><div class="row">
        <button class="big w88"><Ico n="derive" :s="32" />Create Derived<br />Substitutes</button>
        <Ico class="side" n="dn" :w="6" :s="4" />
      </div></div>
      <div class="pan p7"><div class="row">
        <button class="big w54"><Ico n="bplane" :s="32" />Plane<Ico class="bd" n="dn" :w="6" :s="4" /></button>
        <div class="col c4">
          <button class="sm"><Ico n="axis" />Axis<Ico class="sd" n="dn" :w="6" :s="4" /></button>
          <button class="sm"><Ico n="point" />Point<Ico class="sd" n="dn" :w="6" :s="4" /></button>
          <button class="sm"><Ico n="ucs" />UCS</button>
        </div>
      </div></div>
      <div class="pan p8">
        <div class="row">
          <button class="big w66"><Ico n="wrap" :s="32" />Shrinkwrap</button>
          <button class="big w66"><Ico n="wraps" :s="32" />Shrinkwrap<br />Substitute</button>
        </div>
        <Ico class="foot" n="dn" :w="8" :s="5" />
      </div>
      <div class="pan p9">
        <div class="row"><button class="big w54"><Ico n="measure" :s="32" />Measure</button></div>
        <Ico class="foot" n="dn" :w="8" :s="5" />
      </div>
      <div class="pan p10"><button class="tool wide" aria-label="Filter"><Ico n="filter" /><Ico n="dn" :w="6" :s="4" /></button></div>
      <div class="pan p11">
        <button class="tool" aria-label="Distance"><Ico n="smeas" :s="14" /></button><button class="tool" aria-label="Move part"><Ico n="smove" /></button>
        <button class="tool" disabled aria-label="Move"><Ico n="dmove" /></button><button class="tool" disabled aria-label="Rotate"><Ico n="drot" /></button>
        <button class="tool" disabled aria-label="Free move"><Ico n="dfree" /></button><button class="tool" disabled aria-label="Work plane"><Ico n="dplane" /></button>
      </div>
    </section>

    <main class="work">
      <aside class="browser">
        <div class="bhead">
          <span class="model">Model<Ico n="x" :s="11" /></span>
          <button class="q add" aria-label="Add panel"><Ico n="plusd" :s="10" /></button>
          <span class="bright"><Ico n="mag" /><Ico n="menu" :w="14" :s="12" /></span>
        </div>
        <div class="modes"><a href="#assembly">Assembly</a><span>Modeling</span></div>
        <div class="tree">
          <ul>
            <li v-for="(t, i) in tree" :key="i" :class="{ kid: t.child, last: t.last }">
              <span class="stem"><Ico v-if="t.plus" class="pm" n="plus" :s="9" /><Ico v-if="t.minus" class="pm" n="minus" :s="9" /></span>
              <Ico v-if="t.pre" :n="t.pre" class="pre" /><Ico :n="t.icon" /><span class="lbl">{{ t.text }}</span>
              <span v-if="t.mask" class="mask" :class="t.mask" />
            </li>
          </ul>
          <div class="tscroll"><Ico n="up" :s="9" /><i /><Ico n="down" :s="9" /></div>
        </div>
      </aside>
      <section class="stage">
        <div class="canvas">
          <span class="docbtns"><Ico n="dock" :s="12" /><Ico n="x" :s="11" /></span>
          <div class="navbar">
            <Ico class="end" n="nx" :s="9" />
            <Ico class="n1" n="nwheel" :s="22" /><Ico class="ndn" n="dn" :w="6" :s="4" />
            <hr />
            <Ico class="n2" n="nhand" :w="24" :s="26" />
            <Ico class="n3" n="nzoom" :s="24" /><Ico class="ndn" n="dn" :w="6" :s="4" />
            <Ico class="n3" n="norb" :s="24" /><Ico class="ndn" n="dn" :w="6" :s="4" />
            <Ico class="n4" n="nlook" :w="24" :s="26" />
            <Ico class="end bot" n="nm" :s="9" />
          </div>
          <div class="cube"><span>TOP</span></div>
        </div>
        <div class="docs">
          <span class="dhome"><Ico n="home" /></span>
          <span class="doc">K 01 066_0_SSU...iam<Ico n="xb" :s="9" /></span>
          <Ico class="dmenu" n="menu" :w="14" :s="12" />
        </div>
      </section>
    </main>

    <footer class="status"><span>Ready</span><span class="cell">21</span><span class="cell">22</span></footer>

    <div class="taskbar">
      <button class="t" aria-label="Start"><Ico n="win" /></button>
      <button class="t" aria-label="Search"><Ico n="wsearch" /></button>
      <button class="t" aria-label="Task view"><Ico n="tview" /></button>
      <div class="apps">
        <button v-for="a in tasks" :key="a[0]" class="t" :class="a[1]" :aria-label="a[0]"><Ico :n="a[0]" :s="a[0] === 'appwin' || a[0] === 'explorer' ? 20 : 24" :w="a[0] === 'appwin' || a[0] === 'inventor' ? 24 : 22" /></button>
      </div>
      <div class="tray">
        <Ico n="people" /><Ico class="tc" n="up" :s="13" /><Ico n="net" /><Ico n="vol" />
        <time>11:27<br />14.10.2019.</time>
        <span class="note"><Ico n="note" :s="24" /><b>1</b></span>
        <i />
      </div>
    </div>

    <section class="win saveas">
      <header><Ico n="invs" /><span>Spremi kao</span><button class="q cls" aria-label="Close"><Ico n="x" :s="12" /></button></header>
      <div class="sbody">
        <div class="libs">
          <div><Ico n="lib" />Libraries</div>
          <div class="in"><Ico n="yfold" />Content Center Files</div>
        </div>
        <div class="smain">
          <div class="list">
            <table>
              <thead><tr><th class="name"></th><th class="kind">Vrsta</th><th class="size">Veličina</th><th></th></tr></thead>
              <tbody>
                <tr><td></td><td class="k">Mapa s datotekama</td><td></td><td></td></tr>
                <tr><td></td><td class="k">STP datoteka</td><td class="num">1.759 KB</td><td></td></tr>
                <tr class="fill"><td></td><td></td><td></td><td></td></tr>
              </tbody>
            </table>
          </div>
          <div class="frow f1"><label for="fname"></label><span class="combo"><input id="fname" type="text" aria-label="File name" /><Ico n="chev" :s="11" /></span></div>
          <div class="frow"><label for="ftype">Spremi u obliku:</label><span class="combo grey"><select id="ftype"><option>STEP Files (*.stp;*.ste;*.step;*.stpz)</option></select><Ico n="chev" :s="11" /></span></div>
        </div>
      </div>
      <div class="sfoot">
        <button class="helpb" aria-label="Help"><Ico n="help" /></button>
        <button class="btn b1" disabled>Preview</button>
        <button class="btn b2">Options...</button>
        <button class="btn b3">Save</button>
        <button class="btn b4">Cancel</button>
      </div>
      <Ico class="grab" n="grab" :s="8" />
    </section>

    <section class="win step">
      <header><span>STEP File Save As Options</span><button class="q cls" aria-label="Close"><Ico n="x" :s="12" /></button></header>
      <form @submit.prevent>
        <fieldset>
          <legend>Application Protocol</legend>
          <label v-for="p in protocols" :key="p[0]"><input v-model="protocol" type="radio" name="protocol" :value="p[0]" />{{ p[1] }}</label>
        </fieldset>
        <label class="spl" for="acc">Spline Fit Accuracy</label>
        <input id="acc" v-model="accuracy" class="acc" type="text" />
        <label class="chk"><input v-model="sketches" type="checkbox" /><svg class="tick" width="11" height="11"><path d="M1 5l3 3 6-6" fill="none" stroke="#222" stroke-width="1.400" /></svg>Include Sketches</label>
        <label class="cap" for="auth">Authorization</label>
        <div class="ta h81"><textarea id="auth" /><span><Ico n="up" :s="9" /><Ico n="down" :s="9" /></span></div>
        <div class="two">
          <div class="auth">
            <label class="cap" for="author">Author</label>
            <div class="ta h81"><textarea id="author" /><span><Ico n="up" :s="9" /><Ico n="down" :s="9" /></span><i class="mask mask-auth" /></div>
          </div>
          <div class="org">
            <label class="cap" for="org">Organization</label>
            <div class="ta h81"><textarea id="org" /><span><Ico n="up" :s="9" /><Ico n="down" :s="9" /></span></div>
          </div>
        </div>
        <label class="cap" for="desc">Description</label>
        <div class="ta h68"><textarea id="desc" /><span><Ico n="up" :s="9" /><Ico n="down" :s="9" /></span></div>
        <div class="acts">
          <button type="button" class="helpb" aria-label="Help"><Ico n="help" /></button>
          <button class="btn ok">OK</button>
          <button type="button" class="btn">Cancel</button>
        </div>
      </form>
    </section>
  </div>
</template>

<style>
html, body { height: 100%; }
body { margin: 0; overflow: hidden; }
#app { height: 100%; }
</style>

<style scoped>
.defs { position: absolute; }
* { box-sizing: border-box; }
.app { position: relative; height: 100%; display: flex; flex-direction: column; font: 12px/16px Roboto, "Noto Sans", sans-serif; color: #3a3a3a; background: #f5f5f5; }
button, input, select, textarea { font: inherit; color: inherit; margin: 0; }
button { border: 0; background: none; padding: 0; white-space: nowrap; }
.ico { display: block; flex: none; overflow: visible; }
.mask { background: #00a8f5; }

.title { position: relative; display: flex; align-items: flex-start; height: 26px; flex: none; background: #d9d9d9; }
.qat { display: flex; align-items: center; height: 22px; width: 858px; flex: none; }
.logo { width: 28px; display: flex; flex-direction: column; align-items: center; font-size: 7px; line-height: 6px; padding-top: 1px; }
.q { display: flex; align-items: center; justify-content: center; flex: none; }
.w16 { width: 16px; } .w18 { width: 18px; } .w22 { width: 22px; } .w24 { width: 24px; } .w26 { width: 26px; } .w28 { width: 28px; } .w30 { width: 30px; } .w32 { width: 32px; }
.ar { color: #555; } .ar.dim { color: #999; }
.sp { width: 6px; }
.drop { position: relative; display: flex; width: 100px; }
.drop select { appearance: none; width: 100%; height: 22px; border: 0; background: #f5f5f5; padding: 0 4px; font-style: italic; color: #777; }
.drop .ico { position: absolute; right: 3px; top: 9px; color: #555; }
.fx { font: italic 17px/20px "Liberation Serif", serif; color: #555; }
h1 { font: inherit; margin: 4px 0 0; white-space: nowrap; width: 282px; color: #3c3c3c; flex: none; }
h1 span { margin-left: 6px; }
.mask-title { position: relative; width: 88px; height: 18px; margin-top: 3px; flex: none; }
.sys { display: flex; align-items: center; height: 22px; margin-left: auto; width: 495px; flex: none; }
.search { width: 176px; height: 19px; border: 0; background: #f5f5f5; margin-left: 4px; padding: 0 5px; }
.search::placeholder { color: #3c3c3c; opacity: 1; }
.acct { width: 166px; align-self: stretch; position: relative; }
.mask-acct { position: absolute; left: 0; right: 0; top: 0; height: 42px; z-index: 2; }
.sys .ar { margin-left: 5px; }
.wins { display: flex; gap: 13px; margin-left: auto; padding-right: 7px; color: #333; }

.tabs { display: flex; height: 20px; flex: none; background: #d9d9d9; }
.tabs button { padding: 0 10px; color: #666; }
.tabs button:nth-child(n+5) { padding-right: 9px; }
.tabs .file { width: 44px; padding: 0; background: #faa21b; color: #fff; margin-right: 3px; }
.tabs .on { width: 69px; padding: 0; background: #f5f5f5; color: #222; }
.tabs .tog { display: flex; align-items: center; gap: 5px; margin-left: 14px; color: #222; }

.ribbon { display: flex; height: 87px; flex: none; background: #f5f5f5; color: #333; }
.pan { position: relative; flex: none; border-right: 1px solid #d6d6d6; margin-top: 1px; display: flex; flex-direction: column; justify-content: space-between; }
.p1 { width: 95px; } .p2 { width: 95px; } .p3 { width: 266px; } .p4 { width: 74px; } .p5 { width: 124px; } .p6 { width: 104px; } .p7 { width: 127px; } .p8 { width: 135px; } .p9 { width: 56px; } .p10 { width: 41px; }
.row { display: flex; align-items: flex-start; }
.p1 .row { padding-left: 4px; }
.p6 .row { padding-left: 8px; }
.foot { align-self: center; margin-bottom: 2px; color: #333; }
.big { display: flex; flex-direction: column; align-items: center; width: 45px; line-height: 15px; padding-top: 5px; flex: none; text-align: center; }
.big > .ico:first-child, .bigfx { margin-bottom: 4px; }
.big .bd { margin-top: 3px; }
.bigfx { font: italic 36px/32px "Liberation Serif", serif; color: #555; }
.w42 { width: 42px; } .w52 { width: 52px; } .w54 { width: 54px; } .w58 { width: 58px; } .w60 { width: 60px; } .w66 { width: 66px; } .w88 { width: 88px; }
.side { margin: 55px 0 0 -4px; }
.col { display: flex; flex-direction: column; padding: 2px 0 0 7px; flex: none; }
.c84 { width: 92px; padding-left: 8px; } .bare { padding-left: 0; } .c4 { padding-left: 4px; }
.sm { display: flex; align-items: center; gap: 5px; height: 24px; }
.sm:disabled { color: #b3b3b3; }
.sd { margin-left: 2px; }
.p10 { padding: 3px 0 0 4px; }
.p11 { border: 0; padding: 3px 0 0 4px; display: grid; grid-template-columns: 24px 23px; grid-auto-rows: 22px; row-gap: 2px; align-content: start; justify-content: start; }
.tool { width: 24px; height: 22px; border: 1px solid #ccc; display: flex; align-items: center; justify-content: center; }
.tool.wide { width: 35px; gap: 6px; }

.work { flex: 1; display: flex; min-height: 0; }
.browser { width: 464px; flex: none; border-right: 4px solid #bdbdbd; background: #f5f5f5; display: flex; flex-direction: column; min-height: 0; }
.bhead { display: flex; align-items: center; height: 24px; flex: none; background: #d9d9d9; font-size: 11px; }
.model { width: 58px; height: 100%; display: flex; align-items: center; gap: 9px; padding-left: 3px; background: #f5f5f5; }
.add { margin-left: 5px; }
.bright { margin-left: auto; display: flex; align-items: center; gap: 6px; padding-right: 5px; }
.modes { display: flex; align-items: center; height: 34px; flex: none; padding: 0 0 2px 6px; font-size: 11px; }
.modes a { color: #0a8fd6; text-decoration: none; border-bottom: 1px solid #0a8fd6; padding: 0 4px 0 3px; margin-right: 5px; }
.modes span { border-left: 2px solid #888; padding-left: 5px; line-height: 14px; }
.tree { flex: 1; display: flex; min-height: 0; }
ul { list-style: none; margin: 0; padding: 0; flex: 1; font-size: 11px; color: #1a1a1a; }
li { position: relative; display: flex; align-items: center; height: 20px; }
li.kid { padding-left: 16px; }
.pre { margin-right: 2px; }
.stem { position: relative; width: 19px; height: 20px; flex: none; }
.stem::before { content: ""; position: absolute; left: 9px; top: 0; bottom: 0; border-left: 1px dotted #999; }
.last .stem::before { bottom: 10px; }
.stem::after { content: ""; position: absolute; left: 10px; right: 2px; top: 10px; border-top: 1px dotted #999; }
.pm { position: absolute; left: 5px; top: 5px; z-index: 1; }
.lbl { margin-left: 2px; padding-top: 2px; white-space: nowrap; }
li .mask { position: absolute; z-index: 30; }
.mask-row { left: 8px; top: 3px; width: 146px; height: 16px; }
.mask-mate { left: 116px; top: 2px; width: 21px; height: 18px; }
.mask-last { left: 55px; top: 3px; width: 297px; height: 18px; }
.tscroll { width: 17px; margin-right: 1px; background: #efefef; display: flex; flex-direction: column; align-items: center; padding: 4px 0; color: #999; }
.tscroll i { flex: 1; width: 17px; margin: 80px 0 5px; background: #cdcdcd; }

.stage { flex: 1; display: flex; flex-direction: column; min-width: 0; }
.canvas { position: relative; flex: 1; background: linear-gradient(#abb7cc, #dbe7f4); }
.docbtns { position: absolute; right: 2px; top: 6px; display: flex; gap: 9px; color: #444; }
.navbar { position: absolute; right: 0; top: 507px; width: 36px; height: 232px; border: 2px solid #9da6b5; border-radius: 5px; background: #d5dde8; display: flex; flex-direction: column; align-items: center; color: #7d8591; padding-top: 2px; }
.end { align-self: flex-end; margin-right: 3px; }
.bot { margin-top: auto; margin-bottom: 3px; }
.navbar hr { width: 26px; border: 0; border-top: 1px solid #9da6b5; margin: 4px 0 3px; }
.n1 { margin: 10px 0; } .n2 { margin-bottom: 7px; } .n3 { margin-bottom: 7px; } .n4 { margin-top: 6px; }
.ndn + .n3 { margin-top: 7px; }
.cube { position: absolute; right: 35px; bottom: 34px; width: 54px; height: 54px; border: 1px solid #7f858e; background: #dde2ea; display: flex; align-items: center; justify-content: center; box-shadow: 0 0 6px rgba(90, 100, 120, .3); }
.cube span { width: 34px; height: 34px; background: #d3d9e4; text-align: center; font: bold 13px/34px "Open Sans", sans-serif; color: #8f97a5; }
.docs { display: flex; height: 24px; flex: none; background: #d9d9d9; align-items: stretch; }
.dhome { width: 28px; display: flex; align-items: center; justify-content: center; padding-right: 4px; }
.doc { width: 147px; background: #eee; border-bottom: 3px solid #3aa5df; color: #2a8fd0; display: flex; align-items: center; gap: 4px; padding-left: 8px; white-space: nowrap; }
.doc .ico { color: #555; }
.dmenu { margin: 6px 5px 0 auto; }

.status { display: flex; height: 24px; line-height: 24px; flex: none; background: #eee; padding: 0 1px; }
.status span:first-child { margin-right: auto; }
.cell { width: 40px; padding-left: 9px; border-left: 1px solid #d0d0d0; color: #111; }
.cell:last-child { width: 38px; padding-left: 7px; border-right: 1px solid #d0d0d0; }

.taskbar { display: flex; height: 40px; flex: none; background: #060b14; color: #fff; }
.t { width: 48px; height: 40px; display: flex; align-items: center; justify-content: center; }
.apps { display: flex; gap: 1px; margin-left: 3px; }
.t.run { width: 40px; margin: 0 4px; box-shadow: inset 0 -2px #76b9ed; }
.t.active { background: #3a3d42; box-shadow: inset 0 -2px #76b9ed; }
.tray { margin-left: auto; display: flex; align-items: center; color: #fff; }
.tray .ico + .ico { margin-right: 8px; }
.tray .ico.tc { margin: 0 9px 0 21px; }
time { text-align: center; line-height: 18px; width: 66px; margin-right: 9px; margin-left: -3px; }
.note { position: relative; margin-right: 12px; }
.note b { position: absolute; left: 12px; top: 7px; font-size: 11px; line-height: 18px; }
.tray i { width: 5px; height: 40px; border-left: 1px solid #666; }

.win { position: absolute; background: #f0f0f0; color: #000; font-size: 11px; line-height: 14px; display: flex; flex-direction: column; z-index: 10; }
.win header { display: flex; align-items: center; height: 30px; flex: none; background: #fff; font-size: 12px; }
.cls { margin-left: auto; }
.saveas { left: 136px; top: 221px; width: 1392px; height: 774px; border: 1px solid #8a8a8a; box-shadow: 0 4px 14px rgba(0, 0, 0, .35); }
.saveas header { color: #999; gap: 5px; padding: 0 9px 0 8px; }
.saveas header span { line-height: 20px; }
.sbody { flex: 1; display: flex; padding: 11px 16px 0 11px; gap: 15px; }
.libs { width: 182px; height: 666px; background: #bfcddb; border: 1px solid #828790; padding: 1px 4px; font-size: 12px; }
.libs div { display: flex; align-items: center; gap: 4px; height: 18px; }
.libs .in { padding-left: 19px; }
.smain { flex: 1; display: flex; flex-direction: column; padding-top: 33px; }
.list { height: 565px; background: #fff; }
table { border-collapse: collapse; width: 100%; height: 100%; table-layout: fixed; font-size: 12px; }
th, td { padding: 0 0 0 6px; text-align: left; font-weight: normal; border-right: 1px solid #e8eef4; vertical-align: middle; }
th:last-child, td:last-child { border-right: 0; }
tr { height: 20px; } thead tr { height: 24px; }
.name { width: 390px; }
.name, td:first-child { border-right: 0; }
.kind { width: 263px; } .size { width: 80px; }
.kind, .k { padding-left: 4px; }
.num { text-align: right; padding-right: 7px; }
.fill { height: auto; }
.frow { display: flex; align-items: center; margin-top: 8px; width: 1072px; }
.frow.f1 { margin-top: 9px; }
.frow label { width: 82px; flex: none; }
.combo { position: relative; flex: 1; display: flex; border: 1px solid #7a7a7a; background: #fff; height: 22px; }
.combo.grey { border-color: #adadad; background: #e1e1e1; }
.combo input, .combo select { appearance: none; border: 0; background: none; flex: 1; padding: 0 3px; }
.combo .ico { position: absolute; right: 3px; top: 5px; color: #444; }
.sfoot { display: flex; align-items: flex-start; margin: 0 11px; border-top: 1px solid #a0a0a0; padding: 11px 0 0 1px; height: 50px; box-shadow: inset 0 1px #fff; flex: none; }
.btn { width: 73px; height: 21px; border: 1px solid #adadad; background: #e1e1e1; }
.btn:disabled { background: #ccc; border-color: #bfbfbf; color: #8b8b8b; }
.helpb { width: 22px; height: 21px; border: 1px solid #adadad; background: #e1e1e1; display: flex; align-items: center; justify-content: center; }
.b1 { margin-left: auto; } .b2 { margin-left: 17px; } .b3 { margin-left: 56px; } .b4 { margin-left: 7px; }
.grab { position: absolute; right: 3px; bottom: 2px; }

.step { left: 344px; top: 247px; width: 409px; height: 642px; border: 1px solid #1883d7; box-shadow: 0 6px 20px rgba(0, 0, 0, .4); z-index: 20; }
.step header { padding: 0 9px 0 8px; }
form { padding: 15px 13px 0 11px; display: flex; flex-direction: column; }
fieldset { margin: 0 -2px 0 1px; border: 1px solid #dcdcdc; padding: 13px 7px 0; height: 103px; min-width: 0; display: flex; flex-direction: column; gap: 10px; }
legend { padding: 0 1px; }
fieldset label { display: flex; align-items: center; gap: 3px; line-height: 14px; }
input[type=radio] { appearance: none; width: 13px; height: 13px; border: 1px solid #333; border-radius: 50%; background: #fff; }
input[type=radio]:checked { background: radial-gradient(circle, #222 3px, #fff 4px); }
.spl { margin: 10px 0 12px 8px; }
.acc { margin-left: 27px; width: 275px; height: 23px; border: 1px solid #7a7a7a; background: #fff; padding: 0 4px 2px; }
.chk { position: relative; display: flex; align-items: center; gap: 3px; margin: 16px 0 0 10px; height: 13px; }
.chk input { appearance: none; width: 13px; height: 13px; border: 1px solid #333; background: #fff; }
.tick { position: absolute; left: 1px; top: 1px; }
.cap { display: block; line-height: 14px; }
.chk + .cap { margin-top: 20px; }
.ta { position: relative; display: flex; border: 1px solid #7a7a7a; background: #fff; padding: 1px; }
.h81 { height: 81px; } .h68 { height: 68px; }
.cap + .ta { margin-top: 13px; }
.cap + .ta.h68 { margin-top: 11px; }
textarea { border: 0; background: none; resize: none; flex: 1; min-width: 0; padding: 0; }
.ta span { width: 16px; background: #f0f0f0; display: flex; flex-direction: column; align-items: center; justify-content: space-between; padding: 5px 0; color: #b4b4b4; }
.mask-auth { position: absolute; left: -6px; top: -2px; width: 65px; height: 26px; }
.two { display: flex; gap: 12px; margin: 18px 0 14px; }
.auth { width: 198px; padding-top: 1px; } .org { flex: 1; }
.acts { display: flex; margin: 7px 0 0 1px; gap: 11px; }
.acts .ok { margin-left: auto; border: 2px solid #0078d7; }
</style>
